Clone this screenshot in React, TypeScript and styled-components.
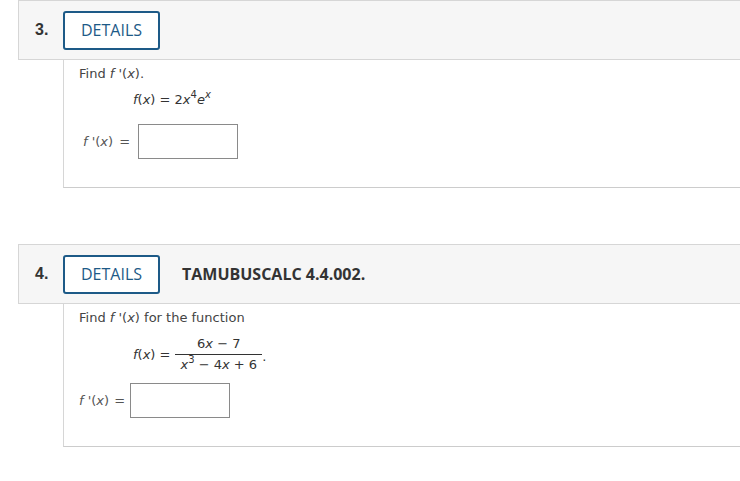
import React from "react";
import styled, { createGlobalStyle } from "styled-components";

const GlobalStyle = createGlobalStyle`
  body {
    margin: 0;
    background: #ffffff;
    font-family: "DejaVu Sans", Verdana, sans-serif;
  }
`;

const Page = styled.div`
  padding: 0 0 0 18px;
  width: 740px;
  box-sizing: border-box;
  overflow: hidden;
`;

const Question = styled.section<{ $gap?: number }>`
  margin-bottom: ${(p) => p.$gap ?? 0}px;
`;

const Header = styled.div`
  display: flex;
  align-items: center;
  height: 58px;
  background: #f6f6f6;
  border: 1px solid #d6d6d6;
  border-right: none;
  padding-left: 16px;
`;

const Number = styled.span`
  font-family: "Liberation Sans", Arial, sans-serif;
  font-weight: bold;
  font-size: 16px;
  color: #333333;
  width: 28px;
`;

const DetailsButton = styled.button`
  box-sizing: border-box;
  width: 97px;
  height: 39px;
  border: 2px solid #1d5a87;
  border-radius: 3px;
  background: #ffffff;
  color: #1d5a87;
  font-family: "Open Sans", sans-serif;
  font-size: 16px;
  font-weight: 500;
  padding: 0;
  cursor: pointer;
`;

const Source = styled.span`
  margin-left: 22px;
  font-family: "Open Sans", sans-serif;
  font-weight: 700;
  font-size: 16px;
  color: #333333;
`;

const Body = styled.div<{ $height: number }>`
  margin-left: 45px;
  height: ${(p) => p.$height}px;
  border-left: 1px solid #d6d6d6;
  border-bottom: 1px solid #cccccc;
  padding: 6px 0 0 15px;
  box-sizing: border-box;
  color: #444444;
  font-size: 13px;
`;

const Prompt = styled.div`
  line-height: 16px;
`;

const I = styled.i`
  font-style: italic;
`;

const Formula = styled.div<{ $top: number }>`
  display: flex;
  align-items: center;
  margin: ${(p) => p.$top}px 0 0 54px;
  color: #333333;
  line-height: 16px;
`;

const Sup = styled.sup`
  font-size: 10px;
  vertical-align: 6px;
  line-height: 0;
`;

const Fraction = styled.span`
  display: inline-flex;
  flex-direction: column;
  align-items: center;
  margin-left: 5px;
`;

const Numerator = styled.span`
  padding: 0 5px 2px;
  border-bottom: 1px solid #333333;
  align-self: stretch;
  text-align: center;
`;

const Denominator = styled.span`
  padding: 2px 5px 0;
`;

const Dot = styled.span`
  align-self: center;
  margin-top: 4px;
`;

const AnswerRow = styled.div<{ $top: number; $indent: number }>`
  display: flex;
  align-items: center;
  margin: ${(p) => p.$top}px 0 0 ${(p) => p.$indent}px;
  color: #555555;
`;

const Equals = styled.span<{ $left: number; $right: number }>`
  margin: 0 ${(p) => p.$right}px 0 ${(p) => p.$left}px;
`;

const AnswerBox = styled.input`
  box-sizing: border-box;
  width: 100px;
  height: 35px;
  border: 1px solid #8a8a8a;
  background: #ffffff;
  padding: 0 4px;
  font-size: 13px;
  outline: none;
`;

const Label = () => (
  <>
    <I>f</I>&nbsp;'(<I>x</I>)
  </>
);

export default function App() {
  return (
    <>
      <GlobalStyle />
      <Page>
        <Question $gap={56}>
          <Header>
            <Number>3.</Number>
            <DetailsButton>DETAILS</DetailsButton>
          </Header>
          <Body $height={128}>
            <Prompt>
              Find <Label />.
            </Prompt>
            <Formula $top={10}>
              <span>
                <I>f</I>(<I>x</I>) = 2<I>x</I>
                <Sup>4</Sup>
                <I>e</I>
                <Sup>
                  <I>x</I>
                </Sup>
              </span>
            </Formula>
            <AnswerRow $top={16} $indent={4}>
              <Label />
              <Equals $left={6} $right={8}>=</Equals>
              <AnswerBox aria-label="answer 3" />
            </AnswerRow>
          </Body>
        </Question>
        <Question>
          <Header>
            <Number>4.</Number>
            <DetailsButton>DETAILS</DetailsButton>
            <Source>TAMUBUSCALC 4.4.002.</Source>
          </Header>
          <Body $height={143}>
            <Prompt>
              Find <Label /> for the function
            </Prompt>
            <Formula $top={10}>
              <span>
                <I>f</I>(<I>x</I>) =
              </span>
              <Fraction>
                <Numerator>
                  6<I>x</I> − 7
                </Numerator>
                <Denominator>
                  <I>x</I>
                  <Sup>3</Sup> − 4<I>x</I> + 6
                </Denominator>
              </Fraction>
              <Dot>.</Dot>
            </Formula>
            <AnswerRow $top={10} $indent={0}>
              <Label />
              <Equals $left={5} $right={5}>=</Equals>
              <AnswerBox aria-label="answer 4" />
            </AnswerRow>
          </Body>
        </Question>
      </Page>
    </>
  );
}
